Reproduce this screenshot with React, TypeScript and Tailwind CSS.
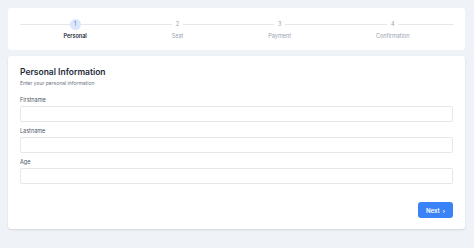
import React from "react";

const steps = ["Personal", "Seat", "Payment", "Confirmation"];

const Field: React.FC<{ label: string }> = ({ label }) => (
  <div className="flex flex-col">
    <label className="text-[5.5px] text-gray-600 h-[8px] leading-[8px]">{label}</label>
    <input className="mt-[2px] h-[16px] w-full rounded-[2px] border border-gray-200 bg-white" />
  </div>
);

export default function App() {
  return (
    <div
      className="min-h-[248px] w-[474px] bg-[#eff2f7] px-[8px] pt-[8px] flex flex-col gap-[6px]"
      style={{ fontFamily: "Inter, 'Liberation Sans', sans-serif" }}
    >
      {/* stepper */}
      <div className="relative h-[42px] w-[457px] rounded-[3px] bg-white px-[13px] pt-[11px]">
        <div className="absolute left-[12px] right-[11px] top-[16px] h-px bg-gray-200" />
        <div className="relative flex">
          {steps.map((s, i) => (
            <div key={s} className="grow flex flex-col items-center">
              <div
                className={
                  i === 0
                    ? "h-[11px] w-[11px] rounded-full bg-[#dbe7fd] text-[5.5px] leading-[11px] text-center text-[#5b7bb8]"
                    : "h-[11px] w-[11px] rounded-full bg-white text-[5.5px] leading-[11px] text-center text-gray-400"
                }
              >
                {i + 1}
              </div>
              <div
                className={
                  i === 0
                    ? "mt-[2px] text-[5.5px] font-semibold text-gray-800"
                    : "mt-[2px] text-[5.5px] text-gray-400"
                }
              >
                {s}
              </div>
            </div>
          ))}
        </div>
      </div>

      {/* form card */}
      <div className="h-[173px] w-[457px] rounded-[3px] bg-white shadow-[0_1px_2px_rgba(0,0,0,0.12)] px-[12px] pt-[10px] flex flex-col">
        <h2 className="text-[8.5px] font-semibold text-gray-800 leading-[12px]">Personal Information</h2>
        <p className="mt-[1px] text-[5px] text-gray-500 leading-[8px]">Enter your personal information</p>
        <div className="mt-[9px] flex flex-col gap-[5px]">
          <Field label="Firstname" />
          <Field label="Lastname" />
          <Field label="Age" />
        </div>
        <div className="mt-auto mb-[11px] flex justify-end">
          <button className="h-[16px] w-[35px] rounded-[3px] bg-[#3b82f6] text-white text-[6px] font-semibold flex items-center justify-center gap-[3px]">
            Next <span className="text-[6px]">›</span>
          </button>
        </div>
      </div>
    </div>
  );
}
